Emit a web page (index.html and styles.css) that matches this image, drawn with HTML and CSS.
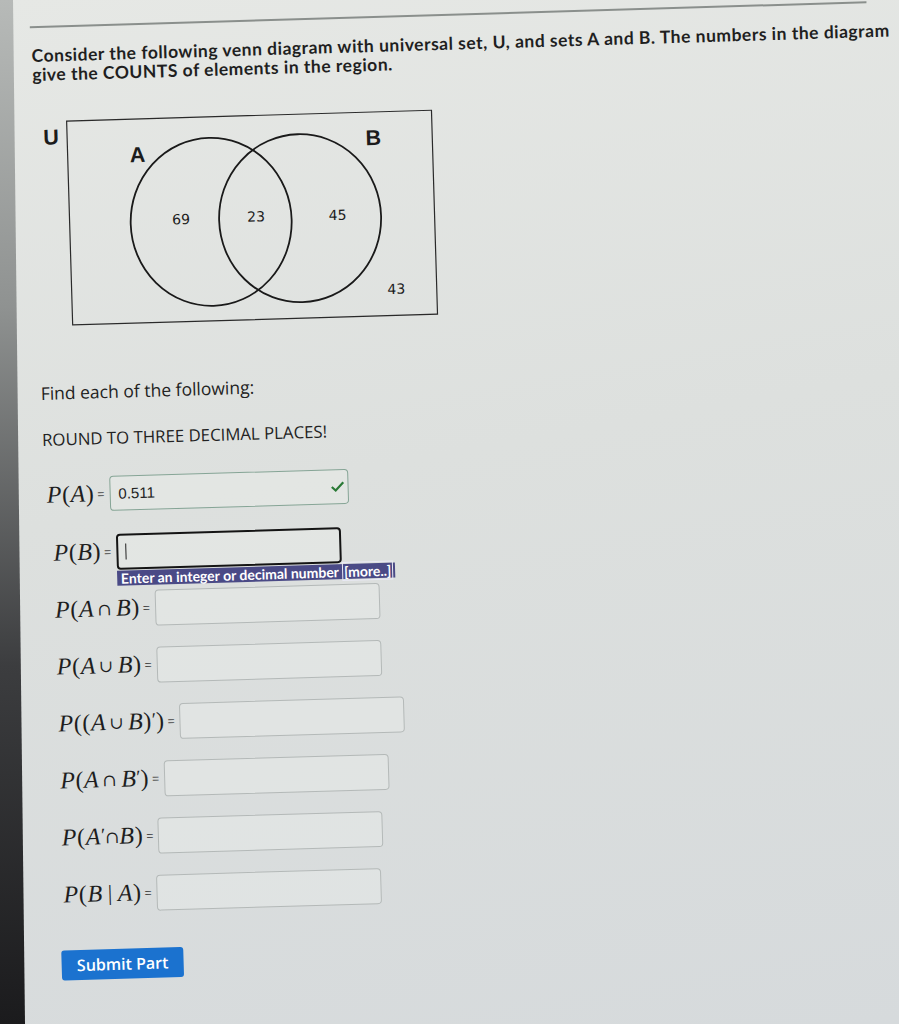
FILE: index.html
```html
<!DOCTYPE html>
<html>
<head>
<meta charset="utf-8">
<link rel="stylesheet" href="styles.css">
</head>
<body>
<div class="page">
  <div class="intro">
    <div class="rule"></div>
    <p class="lead">Consider the following venn diagram with universal set, U, and sets A and B. The numbers in the diagram<br>give the COUNTS of elements in the region.</p>
  </div>

  <svg class="venn" width="400" height="214" viewBox="0 0 400 214">
    <rect x="25" y="5" width="365" height="204" fill="none" stroke="#2a2a2a" stroke-width="1.2"/>
    <text x="9" y="21" class="set">U</text>
    <text x="95" y="41" class="set">A</text>
    <text x="331" y="31" class="set">B</text>
    <ellipse cx="166.5" cy="110" rx="80.5" ry="84" fill="none" stroke="#1a1a1a" stroke-width="1.8"/>
    <ellipse cx="255.5" cy="109" rx="81" ry="84" fill="none" stroke="#1a1a1a" stroke-width="1.8"/>
    <text x="136.5" y="106.5" class="num">69</text>
    <text x="211.5" y="106" class="num">23</text>
    <text x="293" y="107" class="num">45</text>
    <text x="349.5" y="182.5" class="num">43</text>
  </svg>

  <p class="find">Find each of the following:</p>
  <p class="round">ROUND TO THREE DECIMAL PLACES!</p>

  <div class="rows">
    <div class="row first">
      <span class="math"><i>P</i>(<i>A</i>)</span><span class="eq">=</span>
      <div class="box ok wide"><span class="val">0.511</span>
        <svg class="check" width="14" height="11" viewBox="0 0 14 11"><path d="M1.2 5.6 L5 9.2 L12.8 1.2" fill="none" stroke="#2a7a36" stroke-width="2.2"/></svg>
      </div>
    </div>
    <div class="row">
      <span class="math"><i>P</i>(<i>B</i>)</span><span class="eq">=</span>
      <div class="box focus"><span class="caret"></span>
        <div class="tip">Enter an integer or decimal number <span class="more">[more..]</span></div>
      </div>
    </div>
    <div class="row">
      <span class="math"><i>P</i>(<i>A</i><span class="op">∩</span><i>B</i>)</span><span class="eq">=</span>
      <div class="box"></div>
    </div>
    <div class="row">
      <span class="math"><i>P</i>(<i>A</i><span class="op">∪</span><i>B</i>)</span><span class="eq">=</span>
      <div class="box"></div>
    </div>
    <div class="row">
      <span class="math"><i>P</i>((<i>A</i><span class="op">∪</span><i>B</i>)<span class="pr">′</span>)</span><span class="eq">=</span>
      <div class="box"></div>
    </div>
    <div class="row">
      <span class="math"><i>P</i>(<i>A</i><span class="op">∩</span><i>B</i><span class="pr">′</span>)</span><span class="eq">=</span>
      <div class="box"></div>
    </div>
    <div class="row">
      <span class="math"><i>P</i>(<i>A</i><span class="pr">′</span><span class="op tight">∩</span><i>B</i>)</span><span class="eq">=</span>
      <div class="box"></div>
    </div>
    <div class="row">
      <span class="math"><i>P</i>(<i>B</i><span class="op bar">|</span><i>A</i>)</span><span class="eq">=</span>
      <div class="box"></div>
    </div>
  </div>

  <button class="submit">Submit Part</button>
</div>
</body>
</html>
```

FILE: styles.css
```css
html, body {
  margin: 0;
  padding: 0;
  height: 100%;
  overflow: hidden;
}
body {
  background: linear-gradient(170deg, #e6e8e5 0%, #dde0de 45%, #d6dadc 100%);
  color: #1c1c1c;
  font-family: "Open Sans", "DejaVu Sans", sans-serif;
}
body::after {
  content: "";
  position: fixed;
  left: 0;
  top: 0;
  width: 26px;
  height: 100%;
  background: linear-gradient(180deg, #b7bab8 0%, #8f9291 30%, #3c3d3f 65%, #1b1b1d 100%);
  clip-path: polygon(0 0, 13px 0, 25px 100%, 0 100%);
}
.page {
  width: 866px;
  padding-left: 29px;
  box-sizing: border-box;
  transform: rotate(-1.7deg);
  transform-origin: 0 0;
}
.intro {
  padding-top: 27px;
}
.rule {
  height: 1.5px;
  background: #8a8f8c;
  width: 100%;
}
.lead {
  margin: 18px 0 0 1px;
  font-family: Lato, "Open Sans", sans-serif;
  font-weight: 700;
  font-size: 17.5px;
  line-height: 19px;
  letter-spacing: 0.5px;
  white-space: nowrap;
  color: #1f1f1f;
}
.venn {
  display: block;
  margin: 33px 0 0 9px;
}
.venn .set {
  font-family: "Liberation Sans", Arial, sans-serif;
  font-weight: 700;
  font-size: 21.5px;
  fill: #1c1c1c;
  text-anchor: middle;
  dominant-baseline: central;
}
.venn .num {
  font-family: "DejaVu Sans", sans-serif;
  font-size: 14px;
  fill: #1c1c1c;
  text-anchor: middle;
  dominant-baseline: central;
}
.find {
  margin: 52px 0 0 0;
  font-size: 17.5px;
  line-height: 20px;
  color: #222;
}
.round {
  margin: 27px 0 0 0;
  font-size: 16.8px;
  line-height: 20px;
  color: #222;
}
.rows {
  margin-top: 28px;
  display: flex;
  flex-direction: column;
  gap: 21px;
}
.row {
  display: flex;
  align-items: center;
  height: 36px;
  margin-left: 8px;
}
.row.first {
  margin-left: 3px;
  margin-bottom: 1px;
}
.math {
  font-family: "Liberation Serif", "DejaVu Serif", serif;
  font-size: 24px;
  color: #1e1e1e;
  letter-spacing: 0.6px;
  white-space: nowrap;
}
.math i {
  font-style: italic;
}
.math .op {
  font-family: "DejaVu Serif", serif;
  font-size: 17px;
  padding: 0 4px 0 3px;
  position: relative;
  top: -1px;
}
.math .op.tight {
  padding: 0;
  letter-spacing: 0;
}
.math .op.bar {
  font-family: "Liberation Serif", serif;
  font-size: 22px;
  padding: 0 5px;
}
.math .pr {
  font-size: 19px;
  letter-spacing: 0;
  position: relative;
  top: -3px;
}
.eq {
  font-family: "Liberation Sans", sans-serif;
  font-size: 12px;
  color: #4a4a4a;
  margin: 0 5px 0 3px;
}
.box {
  position: relative;
  width: 225px;
  height: 36px;
  border: 1px solid #b4b9b8;
  border-radius: 4px;
  background: rgba(238, 240, 238, 0.35);
  display: flex;
  align-items: center;
  box-sizing: border-box;
}
.box.wide {
  width: 239px;
  height: 35px;
}
.box.ok {
  border-color: #86a596;
  justify-content: space-between;
  padding: 0 3px 0 8px;
}
.val {
  font-family: "Liberation Sans", Arial, sans-serif;
  font-size: 15px;
  color: #222;
}
.box.focus {
  border: 2px solid #141414;
  width: 225px;
  padding-left: 7px;
}
.caret {
  width: 1.5px;
  height: 16px;
  background: #222;
}
.tip {
  position: absolute;
  left: -2px;
  top: 35px;
  background: #4a4a86;
  color: #fff;
  font-family: Lato, "Liberation Sans", sans-serif;
  font-weight: 700;
  font-size: 14px;
  line-height: 15px;
  padding: 0 2px 0 4px;
  white-space: nowrap;
}
.more {
  border: 1px solid #e9e9f5;
  padding: 0 1px;
  line-height: 12px;
}
.submit {
  display: block;
  margin: 37px 0 0 4px;
  width: 122px;
  height: 30px;
  border: none;
  border-radius: 3px;
  background: #1b72cf;
  color: #fff;
  font-family: "Open Sans", sans-serif;
  font-weight: 600;
  font-size: 16px;
  padding: 0;
}
```
